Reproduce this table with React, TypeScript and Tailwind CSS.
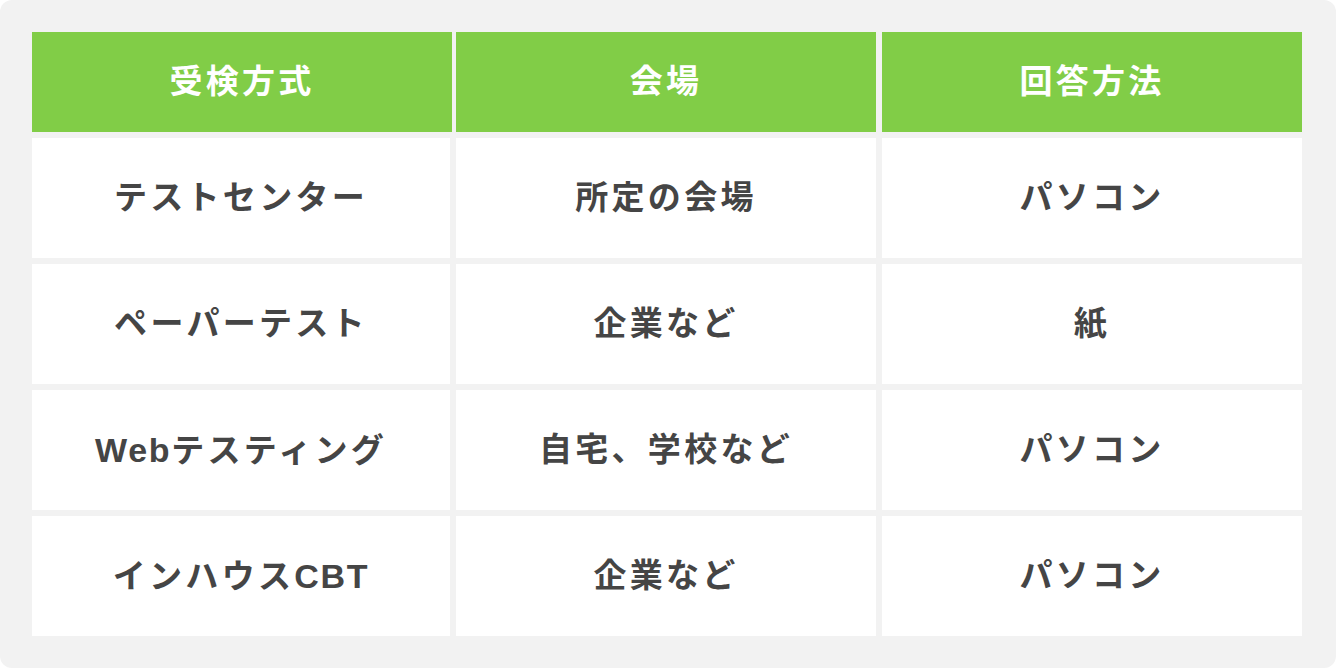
import React from "react";

type Cell = React.ReactNode;

const Latin = ({ children }: { children: React.ReactNode }) => (
  <span className="text-[34px] tracking-[0.05em]">{children}</span>
);

const rows: Cell[][] = [
  ["テストセンター", "所定の会場", "パソコン"],
  ["ペーパーテスト", "企業など", "紙"],
  [<><Latin>Web</Latin>テスティング</>, "自宅、学校など", "パソコン"],
  [<>インハウス<Latin>CBT</Latin></>, "企業など", "パソコン"],
];

const font = { fontFamily: '"Liberation Sans", "Noto Sans CJK JP", sans-serif' };

export default function App() {
  return (
    <div className="w-[1336px] h-[668px] bg-white">
      <div
        className="w-full h-full bg-[#f2f2f2] rounded-[12px] p-[32px] flex flex-col gap-[6px]"
        style={font}
      >
        <div className="flex h-[100px]">
          <div className="w-[420px] bg-[#81cd47] flex items-center justify-center text-white font-bold text-[33px] tracking-[0.1em]">
            受検方式
          </div>
          <div className="w-[420px] ml-[4px] bg-[#81cd47] flex items-center justify-center text-white font-bold text-[33px] tracking-[0.1em]">
            会場
          </div>
          <div className="w-[420px] ml-[6px] bg-[#81cd47] flex items-center justify-center text-white font-bold text-[33px] tracking-[0.1em]">
            回答方法
          </div>
        </div>
        {rows.map((r, i) => (
          <div key={i} className="flex h-[120px] gap-[6px]">
            <div className="w-[418px] bg-white flex items-center justify-center text-[#454545] font-bold text-[33px] tracking-[0.1em]">
              <span>{r[0]}</span>
            </div>
            <div className="w-[420px] bg-white flex items-center justify-center text-[#454545] font-bold text-[33px] tracking-[0.1em]">
              <span>{r[1]}</span>
            </div>
            <div className="w-[420px] bg-white flex items-center justify-center text-[#454545] font-bold text-[33px] tracking-[0.1em]">
              <span>{r[2]}</span>
            </div>
          </div>
        ))}
      </div>
    </div>
  );
}
